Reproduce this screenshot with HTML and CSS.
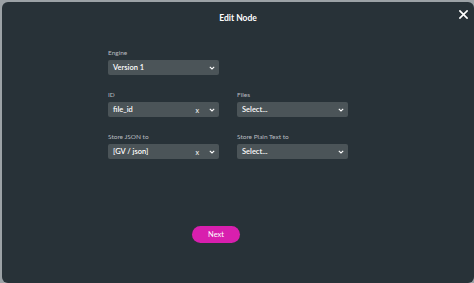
FILE: index.html
```html
<!DOCTYPE html>
<html lang="en">
<head>
    <meta charset="UTF-8">
    <meta name="viewport" content="width=device-width, initial-scale=1.0">
    <title>Edit Node</title>
    <link rel="stylesheet" href="styles.css">
</head>
<body>

<div class="modal">
    <div class="modal-header">
        <span class="modal-title">Edit Node</span>
        <button class="close-btn" aria-label="Close">
            <svg width="9" height="9" viewBox="0 0 10 10">
                <path d="M1 1 L9 9 M9 1 L1 9" stroke="#fff" stroke-width="1.8" stroke-linecap="square"/>
            </svg>
        </button>
    </div>

    <div class="form">
        <div class="field">
            <label>Engine</label>
            <div class="select">
                <span class="value">Version 1</span>
                <span class="chevron"><svg width="6" height="4" viewBox="0 0 6 4"><path d="M0.8 0.8 L3 3 L5.2 0.8" fill="none" stroke="#fff" stroke-width="1.1"/></svg></span>
            </div>
        </div>
        <div class="field empty"></div>

        <div class="field">
            <label>ID</label>
            <div class="select">
                <span class="value">file_id</span>
                <span class="clear">x</span>
                <span class="chevron"><svg width="6" height="4" viewBox="0 0 6 4"><path d="M0.8 0.8 L3 3 L5.2 0.8" fill="none" stroke="#fff" stroke-width="1.1"/></svg></span>
            </div>
        </div>
        <div class="field">
            <label>Files</label>
            <div class="select">
                <span class="value">Select...</span>
                <span class="chevron"><svg width="6" height="4" viewBox="0 0 6 4"><path d="M0.8 0.8 L3 3 L5.2 0.8" fill="none" stroke="#fff" stroke-width="1.1"/></svg></span>
            </div>
        </div>

        <div class="field">
            <label>Store JSON to</label>
            <div class="select">
                <span class="value">[GV / json]</span>
                <span class="clear">x</span>
                <span class="chevron"><svg width="6" height="4" viewBox="0 0 6 4"><path d="M0.8 0.8 L3 3 L5.2 0.8" fill="none" stroke="#fff" stroke-width="1.1"/></svg></span>
            </div>
        </div>
        <div class="field">
            <label>Store Plain Text to</label>
            <div class="select">
                <span class="value">Select...</span>
                <span class="chevron"><svg width="6" height="4" viewBox="0 0 6 4"><path d="M0.8 0.8 L3 3 L5.2 0.8" fill="none" stroke="#fff" stroke-width="1.1"/></svg></span>
            </div>
        </div>
    </div>

    <div class="actions">
        <button class="next-btn">Next</button>
    </div>
</div>

</body>
</html>
```

FILE: styles.css
```css
body {
    margin: 0;
    height: 283px;
    padding: 2px 0 0 2px;
    box-sizing: border-box;
    background-color: #9ca2a6;
    font-family: Lato, "Noto Sans", sans-serif;
    overflow: hidden;
}

.modal {
    height: 281px;
    background-color: #283238;
    border-radius: 6px;
    box-sizing: border-box;
}

.modal-header {
    display: flex;
    justify-content: center;
    align-items: center;
    height: 31px;
    position: relative;
}

.modal-title {
    color: #ffffff;
    font-size: 8.5px;
    font-weight: 700;
}

.close-btn {
    position: absolute;
    top: 5px;
    right: 6px;
    background: none;
    border: none;
    padding: 0;
    cursor: pointer;
}

.form {
    display: grid;
    grid-template-columns: 111px 111px;
    column-gap: 18px;
    row-gap: 15px;
    padding: 15px 0 0 106px;
}

.field label {
    display: block;
    color: #b9bdc0;
    font-size: 6.5px;
    margin-bottom: 3px;
    height: 9px;
    line-height: 9px;
}

.select {
    display: flex;
    align-items: center;
    height: 15px;
    background-color: #4b5458;
    border-radius: 2px;
    padding: 0 4px 0 5px;
    color: #ffffff;
    font-size: 7.5px;
    font-weight: 600;
}

.select .value {
    flex: 1;
}

.select .clear {
    color: #e8e8e8;
    font-size: 7px;
    margin-right: 10px;
}

.select .chevron {
    display: flex;
    align-items: center;
}

.actions {
    display: flex;
    justify-content: center;
    padding: 67px 44px 0 0;
}

.next-btn {
    width: 48px;
    height: 17px;
    border: none;
    border-radius: 9px;
    background-color: #d81fae;
    color: #ffffff;
    font-family: Lato, "Noto Sans", sans-serif;
    font-size: 7.5px;
    cursor: pointer;
}
```
